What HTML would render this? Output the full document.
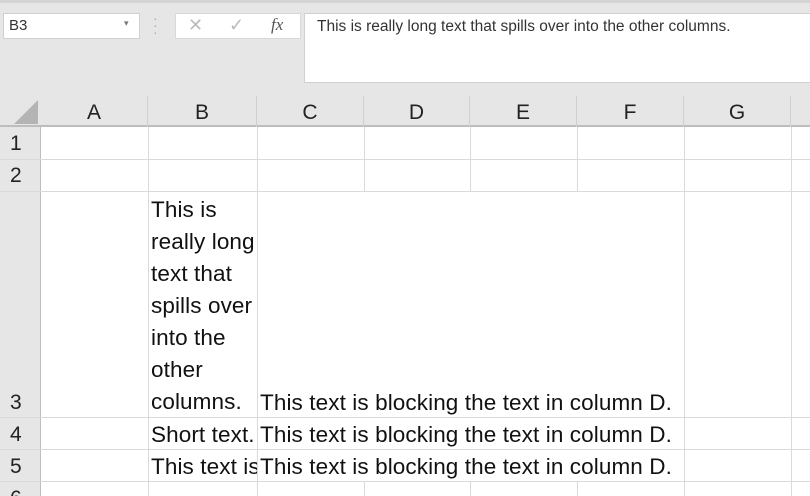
<!DOCTYPE html>
<html style="overflow:hidden;width:810px;height:496px"><head><style>
*{margin:0;padding:0;box-sizing:border-box}
body{width:810px;height:496px;overflow:hidden;background:#e6e6e6;font-family:"Liberation Sans",sans-serif;position:relative}
.a{position:absolute}
.grid{left:41px;top:127px;width:769px;height:369px;background:#fff}
.vl{position:absolute;top:127px;width:1px;height:369px;background:#dadada}
.hl{position:absolute;left:0;width:810px;height:1px;background:#dadada}
.ch{position:absolute;top:96px;height:31px;font-size:21px;color:#222;text-align:center;line-height:33px;border-right:1px solid #d0d0d0}
.rh{position:absolute;left:0;width:41px;font-size:21px;color:#222;padding-left:10px}
.t{position:absolute;font-size:22.5px;color:#111;white-space:nowrap;line-height:32px;letter-spacing:0.1px}
</style></head><body>
<div class="a" style="left:0;top:0;width:810px;height:3px;background:#d4d4d4"></div>
<div class="a" style="left:3px;top:13px;width:137px;height:26px;background:#fff;border:1px solid #d0d0d0;font-size:15px;color:#333;padding:3px 5px">B3</div>
<div class="a" style="left:124px;top:18px;font-size:9px;color:#777">▾</div>
<div class="a" style="left:153px;top:15px;font-size:14px;color:#aaa;line-height:7px">·<br>·<br>·</div>
<div class="a" style="left:175px;top:13px;width:126px;height:26px;background:#fff;border:1px solid #d8d8d8"></div>
<div class="a" style="left:188px;top:15px;font-size:18px;color:#bbb">✕</div>
<div class="a" style="left:229px;top:15px;font-size:18px;color:#bbb">✓</div>
<div class="a" style="left:271px;top:15px;font-size:17px;color:#555;font-family:'Liberation Serif',serif;font-style:italic">fx</div>
<div class="a" style="left:304px;top:13px;width:506px;height:70px;background:#fff;border:1px solid #d0d0d0;border-right:none;font-size:15.5px;color:#333;padding:4px 12px;white-space:nowrap;overflow:hidden">This is really long text that spills over into the other columns.</div>
<div class="a" style="left:0;top:96px;width:810px;height:31px;background:#e6e6e6;border-bottom:2px solid #bdbdbd"></div>
<svg class="a" style="left:12px;top:98px" width="28" height="27"><polygon points="26,2 26,26 2,26" fill="#b4b4b4"/></svg>
<div class="a grid"></div>
<div class="a" style="left:0;top:127px;width:41px;height:369px;background:#e6e6e6;border-right:1px solid #bdbdbd"></div>
<div class="ch" style="left:41px;width:107px">A</div>
<div class="ch" style="left:148px;width:109px">B</div>
<div class="ch" style="left:257px;width:107px">C</div>
<div class="ch" style="left:364px;width:106px">D</div>
<div class="ch" style="left:470px;width:107px">E</div>
<div class="ch" style="left:577px;width:107px">F</div>
<div class="ch" style="left:684px;width:107px">G</div>
<div class="vl" style="left:148px"></div>
<div class="vl" style="left:257px"></div>
<div class="vl" style="left:364px;height:64px"></div>
<div class="vl" style="left:470px;height:64px"></div>
<div class="vl" style="left:577px;height:64px"></div>
<div class="vl" style="left:684px"></div>
<div class="vl" style="left:791px"></div>
<div class="vl" style="left:364px;top:481px;height:15px"></div>
<div class="vl" style="left:470px;top:481px;height:15px"></div>
<div class="vl" style="left:577px;top:481px;height:15px"></div>
<div class="hl" style="top:159px"></div>
<div class="hl" style="top:191px"></div>
<div class="hl" style="top:417px"></div>
<div class="hl" style="top:449px"></div>
<div class="hl" style="top:481px"></div>
<div class="rh" style="top:132px">1</div>
<div class="rh" style="top:164px">2</div>
<div class="rh" style="top:391px">3</div>
<div class="rh" style="top:423px">4</div>
<div class="rh" style="top:455px">5</div>
<div class="rh" style="top:487px">6</div>
<div class="t" style="left:151px;top:194px">This is<br>really long<br>text that<br>spills over<br>into the<br>other<br>columns.</div>
<div class="t" style="left:260px;top:387px">This text is blocking the text in column D.</div>
<div class="t" style="left:151px;top:419px">Short text.</div>
<div class="t" style="left:260px;top:419px">This text is blocking the text in column D.</div>
<div class="t" style="left:151px;top:451px;width:106px;overflow:hidden">This text is</div>
<div class="t" style="left:260px;top:451px">This text is blocking the text in column D.</div>
</body></html>
